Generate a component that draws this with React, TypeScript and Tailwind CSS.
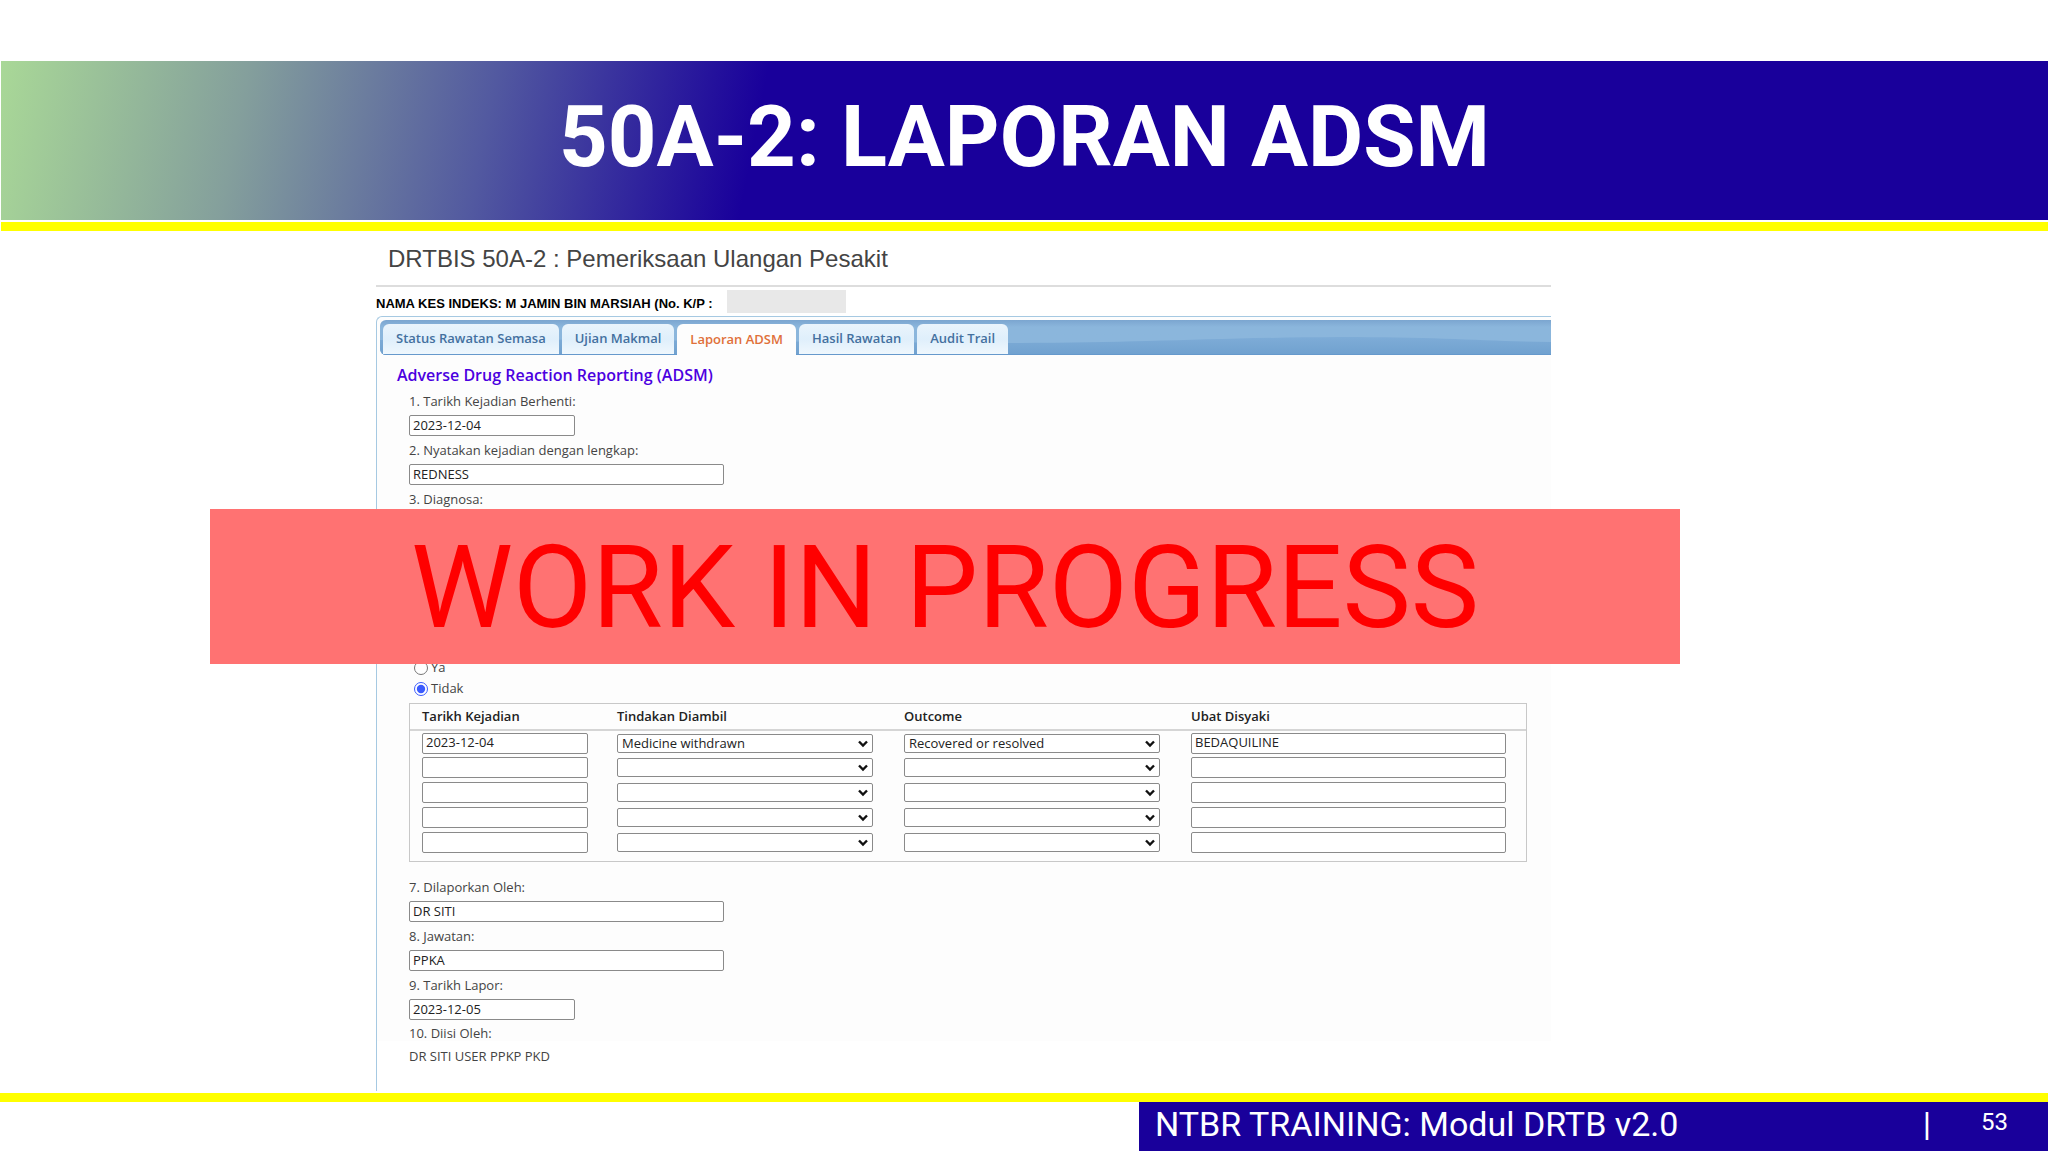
import { useState } from "react";

const tabs = ["Status Rawatan Semasa", "Ujian Makmal", "Laporan ADSM", "Hasil Rawatan", "Audit Trail"];

const events = [
  { date: "2023-12-04", action: "Medicine withdrawn", outcome: "Recovered or resolved", drug: "BEDAQUILINE" },
  { date: "", action: "", outcome: "", drug: "" },
  { date: "", action: "", outcome: "", drug: "" },
  { date: "", action: "", outcome: "", drug: "" },
  { date: "", action: "", outcome: "", drug: "" },
];

const inputStyle = "block h-[21px] rounded-xs border border-[#8a8a8a] bg-white px-[3px] pb-0.5 text-[#222]";

type FieldProps = { id: string; label: string; value: string; short?: boolean };

const Field = ({ id, label, value, short }: FieldProps) => (
  <div>
    <label htmlFor={id} className="block leading-7">{label}</label>
    <input id={id} defaultValue={value} className={`${inputStyle} ${short ? "w-[166px]" : "w-[315px]"}`} />
  </div>
);

const Select = ({ label, value }: { label: string; value: string }) => (
  <div className="relative w-64">
    <select
      aria-label={label}
      defaultValue={value}
      className="block h-[19px] w-full appearance-none rounded-xs border border-[#8a8a8a] bg-white px-1 leading-4 text-[#222]"
    >
      <option value={value}>{value}</option>
    </select>
    <svg viewBox="0 0 10 8" className="pointer-events-none absolute top-1.5 right-[5px] h-2 w-2.5" fill="none" stroke="#111" strokeWidth="2.4">
      <path d="M1 1.5 L5 5.5 L9 1.5" />
    </svg>
  </div>
);

const TabBar = () => {
  const [active, setActive] = useState("Laporan ADSM");

  return (
    <div className="relative ml-[3px] flex h-[35px] items-end gap-[3px] rounded-l-md bg-linear-to-b from-[#7ba5d0] via-[#8bb6dc] via-20% to-[#8bb6dc] pl-[3px]">
      <svg viewBox="0 0 1171 35" preserveAspectRatio="none" className="absolute inset-0 h-full w-full rounded-l-md">
        <defs>
          <linearGradient id="wave" x1="0" y1="0" x2="0" y2="1">
            <stop offset="0" stopColor="#7eacd7" />
            <stop offset="1" stopColor="#70a1cf" />
          </linearGradient>
        </defs>
        <path d="M0 20 C150 18 400 22 640 23 C760 23 820 18 960 17 C1060 17 1100 21 1171 22 V35 H0 Z" fill="url(#wave)" />
        <path d="M0 34.5 H1171" stroke="#6699cc" />
      </svg>
      {tabs.map((tab) => (
        <button
          key={tab}
          type="button"
          onClick={() => setActive(tab)}
          className={
            tab === active
              ? "relative h-[31px] rounded-t-md bg-[#fdfdfd] px-[13px] font-semibold text-[#e0703a]"
              : "relative mb-px h-[30px] rounded-t-md bg-linear-to-b from-[#eaf4fc] via-[#dfeffb] to-[#eff7fd] px-[13px] font-semibold text-[#44709f]"
          }
        >
          {tab}
        </button>
      ))}
    </div>
  );
};

const EventTable = () => (
  <div className="mr-6 border border-[#c8c8c8] pb-1.5">
    <table className="w-full table-fixed text-left">
      <thead>
        <tr className="h-[26px] border-b-2 border-[#d5d5d5] text-[#222]">
          <th className="w-[195px] pl-3 font-semibold">Tarikh Kejadian</th>
          <th className="w-[287px] pl-3 font-semibold">Tindakan Diambil</th>
          <th className="w-[287px] pl-3 font-semibold">Outcome</th>
          <th className="pl-3 font-semibold">Ubat Disyaki</th>
        </tr>
      </thead>
      <tbody>
        {events.map((event, i) => (
          <tr key={i} className="h-[25px]">
            <td className="pl-3">
              <input aria-label="Tarikh Kejadian" defaultValue={event.date} className={`${inputStyle} w-[166px]`} />
            </td>
            <td className="pl-3"><Select label="Tindakan Diambil" value={event.action} /></td>
            <td className="pl-3"><Select label="Outcome" value={event.outcome} /></td>
            <td className="pl-3">
              <input aria-label="Ubat Disyaki" defaultValue={event.drug} className={`${inputStyle} w-[315px]`} />
            </td>
          </tr>
        ))}
      </tbody>
    </table>
  </div>
);

const ReportForm = () => (
  <form className="pl-8">
    <Field id="stopped" label="1. Tarikh Kejadian Berhenti:" value="2023-12-04" short />
    <Field id="event" label="2. Nyatakan kejadian dengan lengkap:" value="REDNESS" />
    <Field id="diagnosis" label="3. Diagnosa:" value="" />

    <fieldset className="mt-[123px] mb-1 pl-[5px]">
      <label className="flex h-[21px] items-center gap-[3px]">
        <input type="radio" name="serious" className="size-[14px]" />
        Ya
      </label>
      <label className="flex h-[21px] items-center gap-[3px]">
        <input type="radio" name="serious" defaultChecked className="size-[14px] accent-[#3b5bfd]" />
        Tidak
      </label>
    </fieldset>

    <EventTable />

    <div className="mt-[11px]">
      <Field id="reporter" label="7. Dilaporkan Oleh:" value="DR SITI" />
      <Field id="position" label="8. Jawatan:" value="PPKA" />
      <Field id="reported" label="9. Tarikh Lapor:" value="2023-12-05" short />
      <p className="leading-[26px]">10. Diisi Oleh:</p>
      <p className="leading-5">DR SITI USER PPKP PKD</p>
    </div>
  </form>
);

export default function App() {
  return (
    <div className="flex min-h-screen flex-col bg-white pt-[61px] pb-px font-['Roboto',sans-serif]">
      <header className="ml-px">
        <div className="bg-[linear-gradient(101deg,#a9d897_0%,#849f9c_12%,#5259a0_24%,#19009b_37%)] pt-[21px] pb-[27px] text-center">
          <h1 className="text-[85px] leading-[111px] font-bold text-white">50A-2: LAPORAN ADSM</h1>
        </div>
        <div className="mt-0.5 h-[9px] bg-[#ffff00]" />
      </header>

      <main className="relative grid flex-1 grid-cols-[376fr_1175fr_497fr] pb-0.5">
        <section className="col-start-2 flex flex-col">
          <h2 className="border-b-2 border-[#dddddd] pt-3.5 pb-3 pl-3 font-['Liberation_Sans',sans-serif] text-2xl leading-7 text-[#444]">
            DRTBIS 50A-2 : Pemeriksaan Ulangan Pesakit
          </h2>
          <div className="flex h-[29px] pt-[3px] font-['Liberation_Sans',sans-serif] text-[13px] leading-7 font-bold text-black">
            <span className="w-[351px]">NAMA KES INDEKS: M JAMIN BIN MARSIAH (No. K/P :</span>
            <span className="h-[23px] w-[119px] bg-[#e8e8e8]" />
          </div>
          <div className="flex-1 rounded-tl-md border-t border-l border-[#a6c9e2] bg-[linear-gradient(#fdfdfd_724px,#ffffff_724px)] pt-[3px] font-['Open_Sans',sans-serif] text-[13px] text-[#444]">
            <TabBar />
            <h3 className="pt-2 pl-5 text-base leading-6 font-semibold text-[#4b00e0]">
              Adverse Drug Reaction Reporting (ADSM)
            </h3>
            <ReportForm />
          </div>
        </section>

        <div className="pointer-events-none absolute inset-x-0 top-[278px] grid grid-cols-[210fr_1470fr_368fr]">
          <p className="col-start-2 bg-[#ff7272] pt-[11px] pb-[9px] text-center text-[115px] leading-[135px] text-[#ff0000]">
            WORK IN PROGRESS
          </p>
        </div>
      </main>

      <footer>
        <div className="h-[9px] bg-[#ffff00]" />
        <div className="grid grid-cols-[1139fr_909fr]">
          <div className="col-start-2 flex h-[49px] items-center bg-[#19009b] pr-10 pb-1 pl-4 text-[34px] leading-[45px] text-white">
            <span className="flex-1">NTBR TRAINING: Modul DRTB v2.0</span>
            <span className="mr-[50px]">|</span>
            <span className="pb-1.5 text-2xl">53</span>
          </div>
        </div>
      </footer>
    </div>
  );
}
